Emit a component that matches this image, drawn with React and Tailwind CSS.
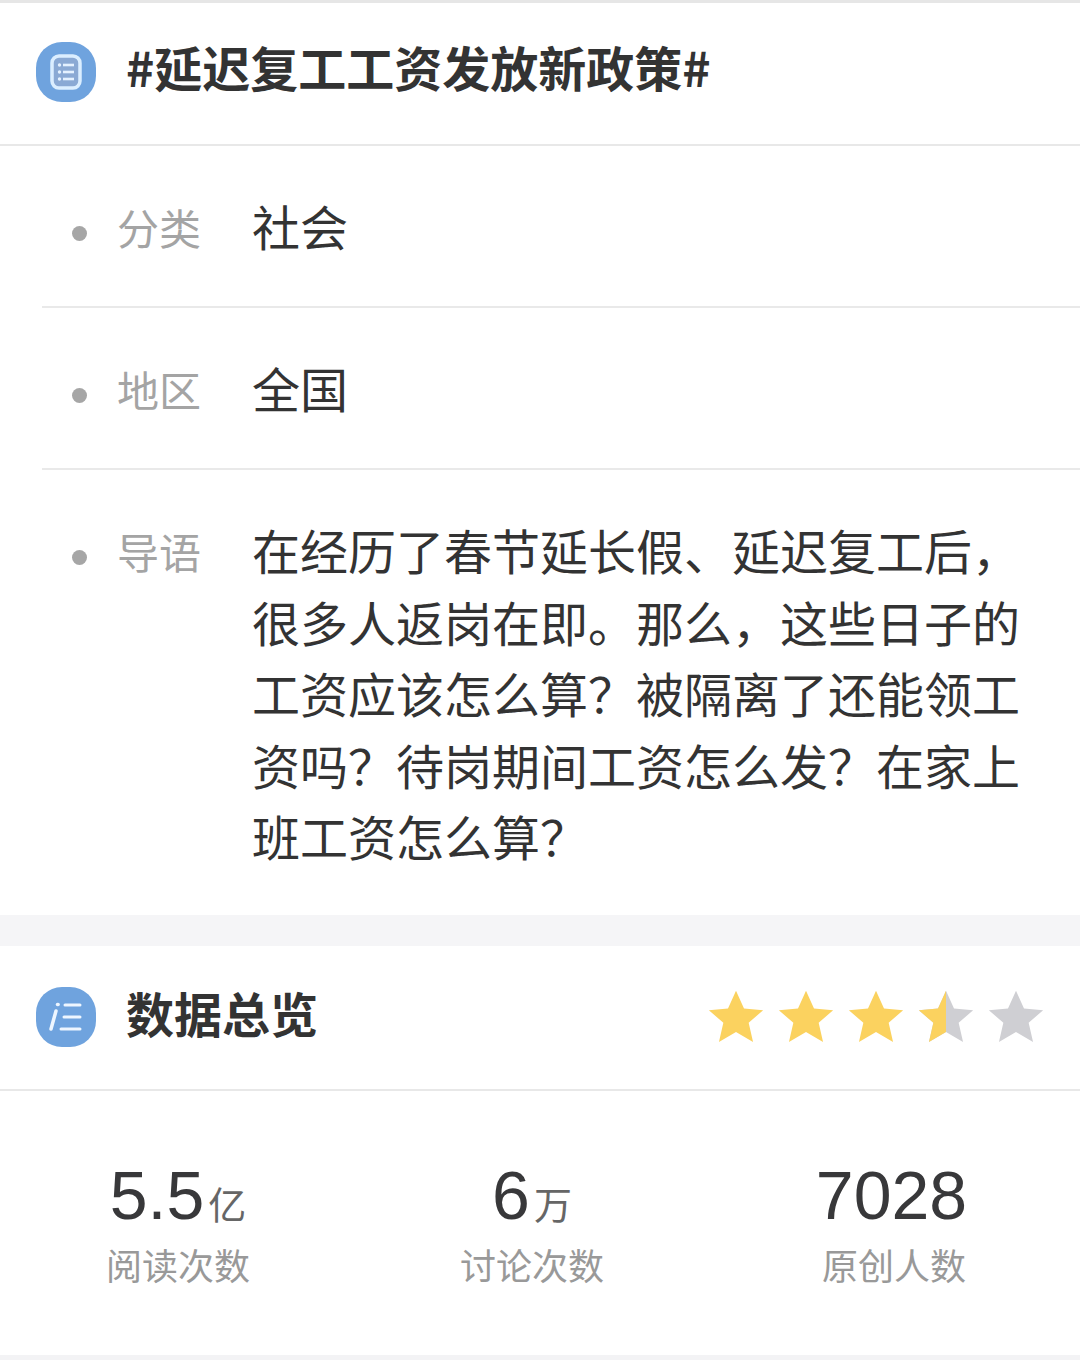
import React from 'react';

const CJK = "font-['Noto_Sans_CJK_SC','Noto_Sans',sans-serif]";
const STAR = 'M12 1.5l3.1 7.1 7.4.7-5.6 5 1.7 7.7L12 18l-6.6 4 1.7-7.7-5.6-5 7.4-.7z';

function ListIcon() {
  return (
    <div className="w-[60px] h-[60px] rounded-[26px] bg-[#6fa3de] flex items-center justify-center">
      <svg width="32" height="36" viewBox="0 0 32 36" fill="none">
        <rect x="2" y="2" width="28" height="32" rx="7" fill="#8aa9d4" stroke="#dbeeff" strokeWidth="3.5" />
        <g fill="#e4f1ff">
          <circle cx="9.5" cy="11" r="1.7" />
          <circle cx="9.5" cy="18" r="1.7" />
          <circle cx="9.5" cy="25" r="1.7" />
          <rect x="13" y="9.7" width="11" height="2.6" />
          <rect x="13" y="16.7" width="11" height="2.6" />
          <rect x="13" y="23.7" width="11" height="2.6" />
        </g>
      </svg>
    </div>
  );
}

function InfoIcon() {
  return (
    <div className="w-[60px] h-[60px] rounded-[26px] bg-[#6fa3de] flex items-center justify-center">
      <svg width="34" height="30" viewBox="0 0 34 30" fill="none" stroke="#eef6ff" strokeLinecap="round" strokeWidth="3">
        <path d="M8.5 2.5h.6" strokeWidth="3.5" />
        <path d="M7 9 2 27" strokeWidth="3.5" />
        <path d="M16 3h15" />
        <path d="M15 15h16" />
        <path d="M12 27h19" />
      </svg>
    </div>
  );
}

function Star({ color = '#fbd25f', half }) {
  return (
    <svg width="62" height="60" viewBox="0 0 24 24" preserveAspectRatio="none">
      <path d={STAR} fill={half ? '#cfcfd3' : color} />
      {half && <path d="M12 1.5 8.9 8.6l-7.4.7 5.6 5-1.7 7.7L12 18z" fill="#fbd25f" />}
    </svg>
  );
}

function InfoRow({ label, children, last }) {
  return (
    <div className={`ml-[42px] flex items-start ${last ? 'pt-[44px] pb-[43px]' : 'h-[162px] border-b-2 border-[#e9e9e9] pt-[44px]'}`}>
      <span className="w-[15px] h-[15px] rounded-full bg-[#a6a6a6] ml-[30px] mt-[36px] shrink-0" />
      <span className="ml-[30px] mt-[1px] w-[135px] shrink-0 text-[42px] leading-[72px] text-[#a4a4a4]">{label}</span>
      <div className="w-[790px] text-[48px] leading-[71.5px] text-[#333]">{children}</div>
    </div>
  );
}

function Stat({ width, value, unit, label }) {
  return (
    <div className={`${width} flex flex-col items-center`}>
      <div className={`flex items-baseline gap-[4px] text-[#38383a] ${unit ? '' : 'pr-[5px]'}`}>
        <span className="font-['Liberation_Sans',sans-serif] text-[68px] leading-[76px]">{value}</span>
        {unit && <span className="text-[38px] leading-[40px] text-[#666]">{unit}</span>}
      </div>
      <div className="mt-[9px] text-[36px] leading-[44px] text-[#999]">{label}</div>
    </div>
  );
}

export default function App() {
  return (
    <div className={`${CJK} w-[1080px] h-[1360px] bg-white overflow-hidden`}>
      {/* Topic header */}
      <header className="h-[146px] border-t-[3px] border-b-2 border-t-[#e6e6e6] border-b-[#e8e8e8] flex items-center pl-[36px] pb-[4px]">
        <ListIcon />
        <h1 className="ml-[30px] pb-[12px] text-[48px] font-bold text-[#333]">#延迟复工工资发放新政策#</h1>
      </header>

      <InfoRow label="分类">社会</InfoRow>
      <InfoRow label="地区">全国</InfoRow>
      <InfoRow label="导语" last>
        在经历了春节延长假、延迟复工后，很多人返岗在即。那么，这些日子的工资应该怎么算？被隔离了还能领工资吗？待岗期间工资怎么发？在家上班工资怎么算？
      </InfoRow>

      <div className="h-[31px] bg-[#f5f5f7]" />

      {/* Data overview */}
      <div className="h-[145px] border-b-2 border-[#e8e8e8] flex items-center pl-[36px] pr-[33px]">
        <InfoIcon />
        <h2 className="ml-[30px] pb-[10px] text-[48px] font-bold text-[#333]">数据总览</h2>
        <div className="ml-auto flex gap-[8px]">
          <Star />
          <Star />
          <Star />
          <Star half />
          <Star color="#cfcfd3" />
        </div>
      </div>

      <div className="h-[269px] border-b-[5px] border-[#f3f3f5] flex pt-[66px]">
        <Stat width="w-[356px]" value="5.5" unit="亿" label="阅读次数" />
        <Stat width="w-[352px]" value="6" unit="万" label="讨论次数" />
        <Stat width="w-[372px]" value="7028" label="原创人数" />
      </div>
    </div>
  );
}
